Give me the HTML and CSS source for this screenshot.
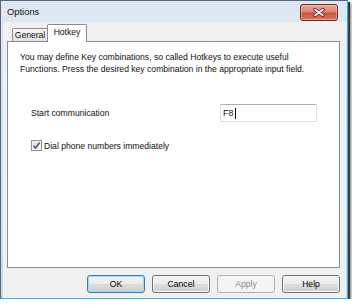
FILE: index.html
```html
<!DOCTYPE html>
<html lang="en">
<head>
    <meta charset="UTF-8">
    <title>Options</title>
    <link rel="stylesheet" href="styles.css">
</head>
<body>
    <div class="window">
        <div class="titlebar">
            <span class="title">Options</span>
            <button class="close-btn" aria-label="Close">
                <svg width="14" height="9" viewBox="0 0 14 9">
                    <path d="M3 1.5 L11 7.5 M11 1.5 L3 7.5" stroke="#5a1a10" stroke-width="3.2" stroke-linecap="round"/>
                    <path d="M3 1.5 L11 7.5 M11 1.5 L3 7.5" stroke="#ffffff" stroke-width="1.6" stroke-linecap="round"/>
                </svg>
            </button>
        </div>
        <div class="client">
            <div class="tabs">
                <div class="tab">General</div>
                <div class="tab active">Hotkey</div>
            </div>
            <div class="panel">
                <p class="intro">You may define Key combinations, so called Hotkeys to execute useful<br>Functions. Press the desired key combination in the appropriate input field.</p>
                <div class="field-row">
                    <label for="hotkey-start">Start communication</label>
                    <div class="hotkey-input" id="hotkey-start">F8<span class="caret"></span></div>
                </div>
                <label class="check-row">
                    <span class="check-box">
                        <svg width="9" height="9" viewBox="0 0 9 9">
                            <path d="M1.5 4.8 L3.6 7 L7.6 1.6" fill="none" stroke="#4b5a78" stroke-width="1.6"/>
                        </svg>
                    </span>
                    Dial phone numbers immediately
                </label>
            </div>
            <div class="buttons">
                <button class="btn default">OK</button>
                <button class="btn">Cancel</button>
                <button class="btn disabled">Apply</button>
                <button class="btn">Help</button>
            </div>
        </div>
    </div>
</body>
</html>
```
FILE: styles.css
```css
body {
    font-family: "Liberation Sans", Arial, sans-serif;
    font-size: 8.6px;
    color: #111;
    background-color: #fff;
    margin: 0;
    padding: 0;
    overflow: hidden;
}

.window {
    box-sizing: border-box;
    width: 348px;
    height: 299px;
    display: flex;
    flex-direction: column;
    padding: 0 1px 0 2px;
    border: 1px solid #56677c;
    border-right-color: #2fb6ea;
    border-bottom-color: #2fb6ea;
    background: linear-gradient(#dfe8f3, #cad8e8);
    box-shadow: 2px 2px 0 #3a3a3a, 3px 3px 3px rgba(0, 0, 0, 0.55);
}

.titlebar {
    height: 21px;
    display: flex;
    align-items: center;
    justify-content: space-between;
    padding-left: 4px;
    padding-right: 8px;
}

.title {
    font-size: 9.4px;
    margin-top: -1px;
}

.close-btn {
    box-sizing: border-box;
    width: 38px;
    height: 17px;
    margin-top: 1px;
    padding: 0;
    display: flex;
    align-items: center;
    justify-content: center;
    border: 1px solid #6a2a1f;
    border-radius: 3px;
    background: linear-gradient(#e9ab9d 0%, #d9836f 45%, #c8543c 55%, #d27a5c 100%);
    box-shadow: inset 0 0 0 1px rgba(255, 220, 210, 0.45);
}

.client {
    flex: 1;
    display: flex;
    flex-direction: column;
    background-color: #f0f0f0;
    padding: 2px 6px 5px 4px;
}

.tabs {
    display: flex;
    align-items: flex-end;
    padding-left: 5px;
    margin-bottom: -1px;
}

.tab {
    box-sizing: border-box;
    height: 13px;
    width: 36px;
    margin-bottom: 1px;
    border: 1px solid #898c95;
    border-bottom: none;
    background: linear-gradient(#f6f6f6, #e2e2e2);
    text-align: center;
    line-height: 13px;
    border-radius: 2px 2px 0 0;
}

.tab.active {
    position: relative;
    z-index: 1;
    height: 18px;
    width: 40px;
    margin-left: -1px;
    margin-bottom: 0;
    background: #fff;
    line-height: 15px;
}

.panel {
    flex: 1;
    background-color: #fff;
    border: 1px solid #898c95;
    padding: 9px 12px;
}

.intro {
    margin: 0;
    line-height: 12px;
}

.field-row {
    display: flex;
    align-items: center;
    margin-top: 29px;
    margin-left: 11px;
}

.field-row label {
    width: 189px;
}

.hotkey-input {
    box-sizing: border-box;
    width: 97px;
    height: 18px;
    padding-left: 2px;
    display: flex;
    align-items: center;
    border: 1px solid #dbdfe6;
    border-top-color: #abadb3;
    border-left-color: #e2e3ea;
    border-radius: 1px;
    font-size: 9px;
}

.caret {
    display: inline-block;
    width: 1px;
    height: 11px;
    margin-left: 1px;
    background-color: #000;
}

.check-row {
    display: flex;
    align-items: center;
    margin-top: 18px;
    margin-left: 11px;
}

.check-box {
    box-sizing: border-box;
    width: 11px;
    height: 11px;
    margin-right: 2px;
    display: flex;
    align-items: center;
    justify-content: center;
    border: 1px solid #8f8f8f;
    background: linear-gradient(135deg, #dcdcdc, #fbfbfb);
    box-shadow: inset 0 0 0 1px #f4f4f4;
}

.buttons {
    display: flex;
    justify-content: flex-end;
    gap: 7px;
    margin-top: 7px;
}

.btn {
    box-sizing: border-box;
    width: 58px;
    height: 18px;
    padding: 0;
    font-family: inherit;
    font-size: 8.6px;
    color: #000;
    border: 1px solid #707070;
    border-radius: 3px;
    background: linear-gradient(#f3f3f3 0%, #ebebeb 48%, #dddddd 52%, #cfcfcf 100%);
    box-shadow: inset 0 0 0 1px #fcfcfc;
}

.btn.default {
    border-color: #3c7fb1;
    box-shadow: inset 0 0 0 1px #9fdcfa;
}

.btn.disabled {
    color: #8d8d8d;
    border-color: #adb2b5;
    background: #f4f4f4;
    box-shadow: none;
}
```
